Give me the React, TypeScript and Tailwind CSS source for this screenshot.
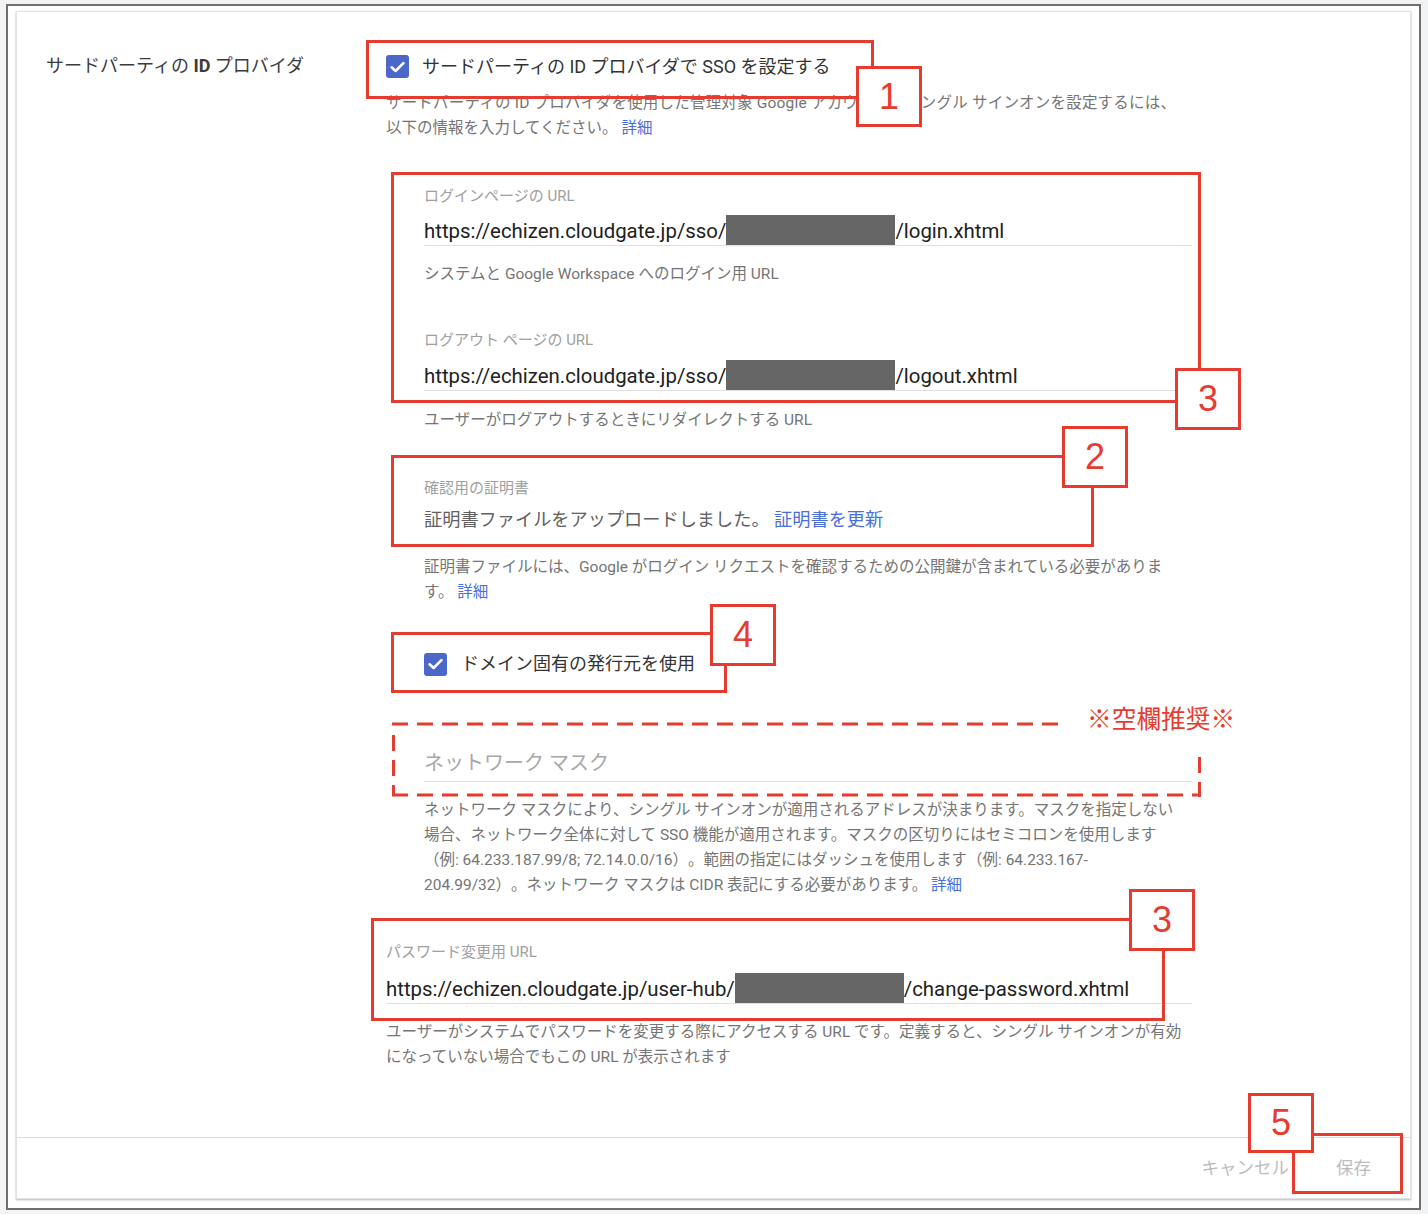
import React from "react";

function Check() {
  return (
    <span className="flex h-[23px] w-[23px] shrink-0 items-center justify-center rounded-[3px] bg-[#4a67c9]">
      <svg width="15" height="12" viewBox="0 0 15 12">
        <path d="M1.6 6.3 L5.6 10 L13.4 2.2" fill="none" stroke="white" strokeWidth="2.6" strokeLinecap="round" strokeLinejoin="round" />
      </svg>
    </span>
  );
}

function Redacted() {
  return <span className="inline-block h-[30px] w-[169px] shrink-0 self-end bg-[#666666]" />;
}

function Num({ n, cls }: { n: string; cls: string }) {
  return (
    <div className={"absolute flex items-center justify-center border-[3px] border-[#e63b2e] bg-white font-['Liberation_Sans',Arial,sans-serif] text-[36px] leading-none text-[#e63b2e] " + cls}>
      {n}
    </div>
  );
}

export default function App() {
  return (
    <div className="relative h-[1214px] w-[1428px] overflow-hidden bg-[#f1f3f4] pl-[6px] pt-[4px] font-[Roboto,'Noto_Sans_CJK_JP',sans-serif] [text-spacing-trim:space-all]">
      {/* outer frame */}
      <div className="h-[1206px] w-[1415px] border-2 border-[#6e6e6e] bg-white pb-[8px] pl-[8px] pr-[9px] pt-[5px]">
        {/* card */}
        <div className="flex h-[1188px] w-[1395px] flex-col border border-[#e2e2e2] bg-white shadow-[0_1px_2px_rgba(0,0,0,0.3)]">
          <div className="flex flex-1 pl-[29px] pt-[42px]">
            <div className="w-[340px] shrink-0 text-[18px] leading-[24px] text-[#3c3c3c]">
              サードパーティの <b className="font-bold">ID</b> プロバイダ
            </div>
            <div className="w-[806px] shrink-0">
              <div className="flex h-[25px] items-center gap-[13px]">
                <Check />
                <span className="text-[18px] leading-[25px] text-[#333333]">サードパーティの ID プロバイダで SSO を設定する</span>
              </div>
              <div className="mt-[12px] text-[15.5px] leading-[25px] text-[#757575]">
                <div className="whitespace-nowrap tracking-[0.2px]">サードパーティの ID プロバイダを使用した管理対象 Google アカウントでシングル サインオンを設定するには、</div>
                <div className="whitespace-nowrap">
                  以下の情報を入力してください。 <span className="text-[#4a6fd9]">詳細</span>
                </div>
              </div>

              <div className="ml-[38px]">
                <div className="mt-[45px] text-[15px] leading-[20px] text-[#a0a0a0]">ログインページの URL</div>
                <div className="mt-[11px] flex h-[29px] items-end whitespace-nowrap border-b border-[#e0e0e0] text-[20.4px] leading-[28px] text-[#212121]">
                  <span>https://echizen.cloudgate.jp/sso/</span>
                  <Redacted />
                  <span>/login.xhtml</span>
                </div>
                <div className="mt-[18px] text-[15.5px] leading-[20px] text-[#757575]">システムと Google Workspace へのログイン用 URL</div>

                <div className="mt-[46px] text-[15px] leading-[20px] text-[#a0a0a0]">ログアウト ページの URL</div>
                <div className="mt-[12px] flex h-[29px] items-end whitespace-nowrap border-b border-[#e0e0e0] text-[20.4px] leading-[28px] text-[#212121]">
                  <span>https://echizen.cloudgate.jp/sso/</span>
                  <Redacted />
                  <span>/logout.xhtml</span>
                </div>
                <div className="mt-[19px] text-[15.5px] leading-[20px] text-[#757575]">ユーザーがログアウトするときにリダイレクトする URL</div>

                <div className="mt-[48px] text-[15px] leading-[20px] text-[#a0a0a0]">確認用の証明書</div>
                <div className="mt-[9px] whitespace-nowrap text-[18.2px] leading-[26px] text-[#616161]">
                  証明書ファイルをアップロードしました。 <span className="text-[#4a6fd9]">証明書を更新</span>
                </div>
                <div className="mt-[22px] text-[15.5px] leading-[25px] text-[#757575]">
                  <div className="whitespace-nowrap">証明書ファイルには、Google がログイン リクエストを確認するための公開鍵が含まれている必要がありま</div>
                  <div className="whitespace-nowrap">
                    す。 <span className="text-[#4a6fd9]">詳細</span>
                  </div>
                </div>

                <div className="mt-[47px] flex h-[24px] items-center gap-[14px]">
                  <Check />
                  <span className="text-[18px] leading-[24px] text-[#333333]">ドメイン固有の発行元を使用</span>
                </div>

                <div className="mt-[73px] border-b border-[#e0e0e0] pb-[4px] text-[20px] leading-[28px] text-[#a8a8a8]">ネットワーク マスク</div>
                <div className="mt-[16px] text-[15.5px] leading-[25px] text-[#757575]">
                  <div className="whitespace-nowrap">ネットワーク マスクにより、シングル サインオンが適用されるアドレスが決まります。マスクを指定しない</div>
                  <div className="whitespace-nowrap">場合、ネットワーク全体に対して SSO 機能が適用されます。マスクの区切りにはセミコロンを使用します</div>
                  <div className="whitespace-nowrap">（例: 64.233.187.99/8; 72.14.0.0/16）。範囲の指定にはダッシュを使用します（例: 64.233.167-</div>
                  <div className="whitespace-nowrap">
                    204.99/32）。ネットワーク マスクは CIDR 表記にする必要があります。 <span className="text-[#4a6fd9]">詳細</span>
                  </div>
                </div>
              </div>

              <div className="mt-[44px] text-[15px] leading-[20px] text-[#a0a0a0]">パスワード変更用 URL</div>
              <div className="mt-[13px] flex h-[29px] items-end whitespace-nowrap border-b border-[#e0e0e0] text-[20.4px] leading-[28px] text-[#212121]">
                <span>https://echizen.cloudgate.jp/user-hub/</span>
                <Redacted />
                <span>/change-password.xhtml</span>
              </div>
              <div className="mt-[16px] text-[15.5px] leading-[25px] text-[#757575]">
                <div className="whitespace-nowrap">ユーザーがシステムでパスワードを変更する際にアクセスする URL です。定義すると、シングル サインオンが有効</div>
                <div className="whitespace-nowrap">になっていない場合でもこの URL が表示されます</div>
              </div>
            </div>
          </div>
          {/* footer */}
          <div className="flex h-[61px] items-center justify-end gap-[47px] border-t border-[#dcdcdc] pr-[39px] text-[17.5px] leading-[24px] text-[#bdbdbd]">
            <span>キャンセル</span>
            <span>保存</span>
          </div>
        </div>
      </div>

      {/* annotations */}
      <div className="absolute left-[366px] top-[40px] h-[59px] w-[508px] border-[3px] border-[#e63b2e]" />
      <Num n="1" cls="left-[856px] top-[66px] h-[61px] w-[66px]" />

      <div className="absolute left-[391px] top-[172px] h-[231px] w-[810px] border-[3px] border-[#e63b2e]" />
      <Num n="3" cls="left-[1175px] top-[368px] h-[62px] w-[66px]" />

      <div className="absolute left-[391px] top-[455px] h-[92px] w-[703px] border-[3px] border-[#e63b2e]" />
      <Num n="2" cls="left-[1062px] top-[426px] h-[62px] w-[66px]" />

      <div className="absolute left-[391px] top-[632px] h-[61px] w-[336px] border-[3px] border-[#e63b2e]" />
      <Num n="4" cls="left-[710px] top-[604px] h-[62px] w-[66px]" />

      <svg className="pointer-events-none absolute left-0 top-0" width="1428" height="1214">
        <g stroke="#e63b2e" strokeWidth="3" fill="none" strokeDasharray="16 9">
          <path d="M392 724 H1066" />
          <path d="M393.5 735 V796" />
          <path d="M392 795 H1201" />
          <path d="M1199.5 757 V797" />
        </g>
      </svg>
      <div className="absolute left-[1087px] top-[705px] whitespace-nowrap text-[24.7px] leading-[30px] text-[#e63b2e]">※空欄推奨※</div>

      <div className="absolute left-[371px] top-[918px] h-[103px] w-[794px] border-[3px] border-[#e63b2e]" />
      <Num n="3" cls="left-[1129px] top-[889px] h-[62px] w-[66px]" />

      <div className="absolute left-[1292px] top-[1133px] h-[61px] w-[111px] border-[3px] border-[#e63b2e]" />
      <Num n="5" cls="left-[1248px] top-[1093px] h-[60px] w-[66px]" />
    </div>
  );
}
